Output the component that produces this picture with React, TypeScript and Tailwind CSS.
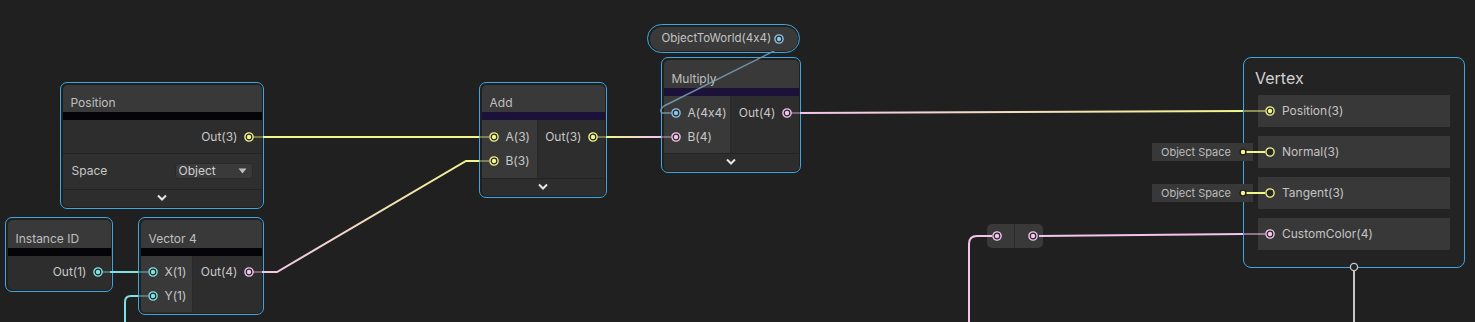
import React from 'react';

const YEL = '#f2f58a';
const PNK = '#f4c4ee';
const CYN = '#80e1e5';
const BLU = '#8ec4e4';

type PortProps = { color: string; hollow?: boolean };

const Port: React.FC<PortProps> = ({ color, hollow = false }) => (
  <svg width="10" height="10" viewBox="0 0 10 10" className="shrink-0">
    <circle cx="5" cy="5" r="4.1" fill="#262626" stroke={color} strokeWidth="1.4" />
    {!hollow && <circle cx="5" cy="5" r="2.2" fill={color} />}
  </svg>
);

const Frame: React.FC<{ className: string; children: React.ReactNode }> = ({ className, children }) => (
  <div className={`absolute rounded-[7px] border-[1.5px] border-[#3ea7df] p-[1.5px] ${className}`}>
    <div className="flex h-full flex-col overflow-hidden rounded-[5px] bg-[#2d2d2d]">{children}</div>
  </div>
);

const Header: React.FC<{ title: string; tall?: boolean }> = ({ title, tall }) => (
  <div className={`${tall ? 'h-[28px] pt-[12px]' : 'h-[27px] pt-[11px]'} shrink-0 bg-[#393939] pl-[8px] text-[12px] leading-[14px] text-[#bfbfbf]`}>
    {title}
  </div>
);

const Chevron = () => (
  <div className="flex h-[17px] shrink-0 items-center justify-center border-t border-[#232323] bg-[#2d2d2d]">
    <svg width="12" height="8" viewBox="0 0 12 8">
      <path d="M2 1.5 L6 5.5 L10 1.5" fill="none" stroke="#e6e6e6" strokeWidth="2" />
    </svg>
  </div>
);

const InRow: React.FC<{ label: string; color: string }> = ({ label, color }) => (
  <div className="flex h-[24px] items-center gap-[7px] pl-[7px]">
    <Port color={color} />
    <span>{label}</span>
  </div>
);

const OutRow: React.FC<{ label: string; color: string; pr?: string }> = ({ label, color, pr = 'pr-[7px]' }) => (
  <div className={`flex h-[24px] items-center justify-end gap-[6px] ${pr}`}>
    <span>{label}</span>
    <Port color={color} />
  </div>
);

const VertexRow: React.FC<{ label: string; color: string; hollow?: boolean }> = ({ label, color, hollow }) => (
  <div className="flex h-[32px] w-[192px] items-center gap-[7px] bg-[#383838] pl-[7px] text-[12px] text-[#c4c4c4]">
    <Port color={color} hollow={hollow} />
    <span>{label}</span>
  </div>
);

function Wires() {
  const dim = 0.38;
  return (
    <svg className="pointer-events-none absolute left-0 top-0" width="1475" height="322">
      <defs>
        <linearGradient id="g1" gradientUnits="userSpaceOnUse" x1="262" y1="0" x2="479" y2="0">
          <stop offset="0" stopColor={PNK} />
          <stop offset="1" stopColor={YEL} />
        </linearGradient>
        <linearGradient id="g2" gradientUnits="userSpaceOnUse" x1="606" y1="0" x2="661" y2="0">
          <stop offset="0" stopColor={YEL} />
          <stop offset="1" stopColor={PNK} />
        </linearGradient>
        <linearGradient id="g3" gradientUnits="userSpaceOnUse" x1="800" y1="0" x2="1243" y2="0">
          <stop offset="0" stopColor={PNK} />
          <stop offset="1" stopColor={YEL} />
        </linearGradient>
      </defs>
      <g fill="none" strokeWidth="2">
        {/* Position -> Add A */}
        <path d="M253 137 H263" stroke={YEL} strokeOpacity={dim} />
        <path d="M263 137 H479" stroke={YEL} />
        <path d="M479 137 H489" stroke={YEL} strokeOpacity={dim} />
        {/* Vector 4 -> Add B */}
        <path d="M253 272 H262" stroke={PNK} strokeOpacity={dim} />
        <path d="M262 272 H277 L466 161 H479" stroke="url(#g1)" />
        <path d="M479 161 H489" stroke={YEL} strokeOpacity={dim} />
        {/* Add -> Multiply B */}
        <path d="M597 137 H606" stroke={YEL} strokeOpacity={dim} />
        <path d="M606 137 H661" stroke="url(#g2)" />
        <path d="M661 137 H671" stroke={PNK} strokeOpacity={dim} />
        {/* Multiply -> Vertex Position */}
        <path d="M791 113 H800" stroke={PNK} strokeOpacity={dim} />
        <path d="M800 113 L1243 111" stroke="url(#g3)" />
        <path d="M1244 111 H1265" stroke={YEL} strokeOpacity={0.5} />
        {/* Instance ID -> X */}
        <path d="M102 272 H110" stroke={CYN} strokeOpacity={dim} />
        <path d="M110 272 H138" stroke={CYN} />
        <path d="M138 272 H148" stroke={CYN} strokeOpacity={dim} />
        {/* Y input, from below */}
        <path d="M138 296 H148" stroke={CYN} strokeOpacity={dim} />
        <path d="M138 296 H131 Q125 296 125 302 V322" stroke={CYN} />
        {/* redirect */}
        <path d="M992 236 H977 Q969 236 969 244 V322" stroke={PNK} />
        <path d="M1039 236 L1243 234" stroke={PNK} />
        <path d="M1244 234 H1265" stroke={PNK} strokeOpacity={0.5} />
        {/* default value wires */}
        <path d="M1245 152 H1265" stroke={YEL} />
        <path d="M1245 193 H1265" stroke={YEL} />
        {/* vertex output */}
        <path d="M1354 271 V322" stroke="#c8c8c8" />
        <circle cx="1354" cy="267" r="3.6" fill="#232323" stroke="#c8c8c8" strokeWidth="1.3" />
      </g>
      <circle cx="1243" cy="152" r="3.6" fill="#1d1d1d" />
      <circle cx="1243" cy="152" r="2.2" fill={YEL} />
      <circle cx="1243" cy="193" r="3.6" fill="#1d1d1d" />
      <circle cx="1243" cy="193" r="2.2" fill={YEL} />
    </svg>
  );
}

export default function App() {
  return (
    <div className="relative h-[322px] w-[1475px] overflow-hidden bg-[#202020] font-['Inter',sans-serif] text-[12px] text-[#c8c8c8] [font-feature-settings:'calt'_0]">
      {/* Vertex context */}
      <div className="absolute left-[1243px] top-[57px] flex h-[211px] w-[222px] flex-col rounded-[8px] border border-[#3ea7df] bg-[#232323]">
        <div className="pl-[11px] pt-[10px] text-[16px] leading-[20px] text-[#d2d2d2]">Vertex</div>
        <div className="mt-[7px] flex flex-col gap-[9px] pl-[14px]">
          <VertexRow label="Position(3)" color={YEL} />
          <VertexRow label="Normal(3)" color={YEL} hollow />
          <VertexRow label="Tangent(3)" color={YEL} hollow />
          <VertexRow label="CustomColor(4)" color={PNK} />
        </div>
      </div>

      <div className="absolute left-[1152px] top-[143px] flex h-[18px] w-[101px] items-center bg-[#383838] pl-[9px] text-[11px] text-[#bdbdbd]">
        Object Space
      </div>
      <div className="absolute left-[1152px] top-[184px] flex h-[18px] w-[101px] items-center bg-[#383838] pl-[9px] text-[11px] text-[#bdbdbd]">
        Object Space
      </div>

      {/* Position */}
      <Frame className="left-[60px] top-[82px] h-[127px] w-[204px]">
        <Header title="Position" />
        <div className="h-[8px] shrink-0 bg-[#050507]" />
        <div className="flex h-[33px] shrink-0 items-center justify-end gap-[6px] pr-[8px] pt-[1px]">
          <span>Out(3)</span>
          <Port color={YEL} />
        </div>
        <div className="flex h-[36px] shrink-0 items-center justify-between border-t border-[#232323] bg-[#2f2f2f] pl-[9px] pr-[9px]">
          <span>Space</span>
          <div className="flex h-[16px] w-[78px] items-center justify-between rounded-[3px] border border-[#2a2a2a] bg-[#3a3a3a] pl-[3px] pr-[5px] text-[#d0d0d0]">
            <span>Object</span>
            <svg width="9" height="6" viewBox="0 0 9 6">
              <path d="M0.5 0.5 H8.5 L4.5 5.5 Z" fill="#bdbdbd" />
            </svg>
          </div>
        </div>
        <Chevron />
      </Frame>

      {/* Add */}
      <Frame className="left-[479px] top-[82px] h-[116px] w-[128px]">
        <Header title="Add" />
        <div className="h-[8px] shrink-0 bg-[#1c1139]" />
        <div className="flex h-[58px] shrink-0">
          <div className="w-[56px] border-r border-[#2a2a2a] bg-[#393939] pt-[5px]">
            <InRow label="A(3)" color={YEL} />
            <InRow label="B(3)" color={YEL} />
          </div>
          <div className="flex-1 pt-[5px]">
            <OutRow label="Out(3)" color={YEL} />
          </div>
        </div>
        <Chevron />
      </Frame>

      {/* Multiply */}
      <Frame className="left-[661px] top-[57px] h-[116px] w-[140px]">
        <Header title="Multiply" tall />
        <div className="h-[8px] shrink-0 bg-[#1c1139]" />
        <div className="flex h-[57px] shrink-0">
          <div className="w-[67px] border-r border-[#2a2a2a] bg-[#393939] pt-[5px]">
            <InRow label="A(4x4)" color={BLU} />
            <InRow label="B(4)" color={PNK} />
          </div>
          <div className="flex-1 pt-[5px]">
            <OutRow label="Out(4)" color={PNK} />
          </div>
        </div>
        <Chevron />
      </Frame>

      {/* Instance ID */}
      <Frame className="left-[5px] top-[217px] h-[75px] w-[108px]">
        <Header title="Instance ID" tall />
        <div className="h-[8px] shrink-0 bg-[#050507]" />
        <div className="flex h-[33px] shrink-0 items-center justify-end gap-[6px] pr-[8px]">
          <span>Out(1)</span>
          <Port color={CYN} />
        </div>
      </Frame>

      {/* Vector 4 */}
      <Frame className="left-[138px] top-[217px] h-[98px] w-[126px]">
        <Header title="Vector 4" tall />
        <div className="h-[8px] shrink-0 bg-[#050507]" />
        <div className="flex h-[56px] shrink-0">
          <div className="w-[52px] border-r border-[#2a2a2a] bg-[#393939] pt-[4px]">
            <InRow label="X(1)" color={CYN} />
            <InRow label="Y(1)" color={CYN} />
          </div>
          <div className="flex-1 pt-[4px]">
            <OutRow label="Out(4)" color={PNK} pr="pr-[8px]" />
          </div>
        </div>
      </Frame>

      {/* redirect node */}
      <div className="absolute left-[987px] top-[224px] flex h-[24px] w-[56px] rounded-[5px] bg-[#393939]">
        <div className="flex w-[28px] items-center border-r border-[#2b2b2b] pl-[5px]">
          <Port color={PNK} />
        </div>
        <div className="flex items-center pl-[13px]">
          <Port color={PNK} />
        </div>
      </div>

      <Wires />

      {/* matrix wire drawn over Multiply */}
      <svg className="pointer-events-none absolute left-0 top-0" width="1475" height="322">
        <path d="M778 40 L774 51 L664 106 Q659 110 662 113 H671" fill="none" stroke="#7aa2b8" strokeOpacity="0.85" strokeWidth="1.5" />
      </svg>

      {/* ObjectToWorld property */}
      <div className="absolute left-[647px] top-[24px] h-[29px] w-[153px] rounded-full border-[1.5px] border-[#3ea7df] p-[1.5px]">
        <div className="flex h-full items-center justify-between rounded-full bg-[#3a3a3a] pl-[12px] pr-[14px] text-[11.5px] text-[#c4c4c4]">
          <span>ObjectToWorld(4x4)</span>
          <Port color={BLU} />
        </div>
      </div>
    </div>
  );
}
